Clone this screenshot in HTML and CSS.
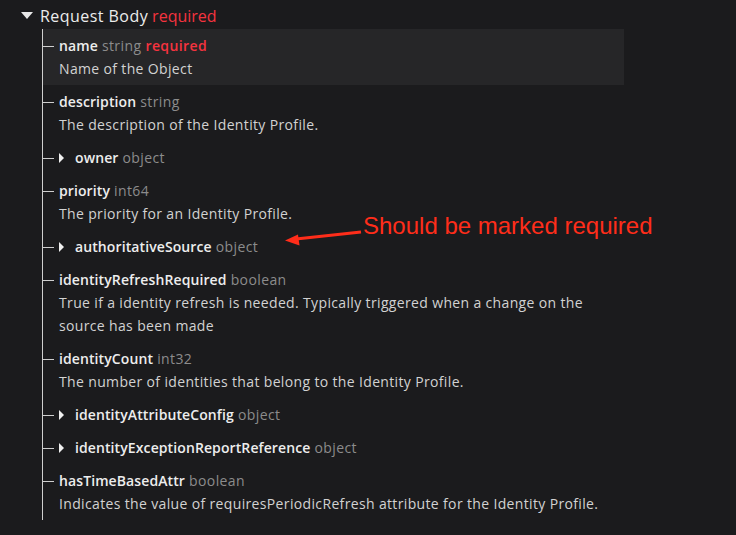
FILE: index.html
```html
<!DOCTYPE html>
<html>
<head>
<meta charset="utf-8">
<link rel="stylesheet" href="styles.css">
</head>
<body>
<div class="schema">
  <div class="heading">
    <span class="caret-down"></span>
    <span class="heading-title">Request Body</span>
    <span class="req">required</span>
  </div>
  <ul class="props">
    <li class="prop active">
      <div class="title"><span class="name">name</span> <span class="type">string</span> <span class="req small">required</span></div>
      <div class="desc">Name of the Object</div>
    </li>
    <li class="prop">
      <div class="title"><span class="name">description</span> <span class="type">string</span></div>
      <div class="desc">The description of the Identity Profile.</div>
    </li>
    <li class="prop collapsed">
      <div class="title"><span class="caret-right"></span><span class="name">owner</span> <span class="type">object</span></div>
    </li>
    <li class="prop">
      <div class="title"><span class="name">priority</span> <span class="type">int64</span></div>
      <div class="desc">The priority for an Identity Profile.</div>
    </li>
    <li class="prop collapsed">
      <div class="title"><span class="caret-right"></span><span class="name">authoritativeSource</span> <span class="type">object</span></div>
      <div class="note">
        <svg class="arrow" width="80" height="20" viewBox="0 0 80 20"><path d="M77 6 L12 13" stroke="#ff2d1a" stroke-width="3" fill="none"/><path d="M1 14.5 L14 8.5 L15.5 19.5 Z" fill="#ff2d1a"/></svg>
        <span class="note-text">Should be marked required</span>
      </div>
    </li>
    <li class="prop">
      <div class="title"><span class="name">identityRefreshRequired</span> <span class="type">boolean</span></div>
      <div class="desc">True if a identity refresh is needed. Typically triggered when a change on the source has been made</div>
    </li>
    <li class="prop">
      <div class="title"><span class="name">identityCount</span> <span class="type">int32</span></div>
      <div class="desc">The number of identities that belong to the Identity Profile.</div>
    </li>
    <li class="prop collapsed">
      <div class="title"><span class="caret-right"></span><span class="name">identityAttributeConfig</span> <span class="type">object</span></div>
    </li>
    <li class="prop collapsed">
      <div class="title"><span class="caret-right"></span><span class="name">identityExceptionReportReference</span> <span class="type">object</span></div>
    </li>
    <li class="prop">
      <div class="title"><span class="name">hasTimeBasedAttr</span> <span class="type">boolean</span></div>
      <div class="desc">Indicates the value of requiresPeriodicRefresh attribute for the Identity Profile.</div>
    </li>
  </ul>
</div>
</body>
</html>
```
FILE: styles.css
```css
html, body {
  margin: 0;
  padding: 0;
  background: #1b1b1d;
}
body {
  font-family: "Open Sans", "Noto Sans", sans-serif;
  color: #d6d6d6;
  width: 736px;
  height: 535px;
  overflow: hidden;
}
.schema {
  padding: 4px 0 0 21px;
}
.heading {
  display: flex;
  align-items: center;
  height: 23px;
  font-size: 16px;
  font-weight: 500;
  white-space: nowrap;
}
.caret-down {
  width: 0;
  height: 0;
  border-left: 6px solid transparent;
  border-right: 6px solid transparent;
  border-top: 7px solid #e8e8e8;
  margin-right: 7px;
}
.heading-title {
  color: #ececec;
  margin-right: 4px;
  letter-spacing: 0.45px;
}
.req {
  color: #f5333f;
}
.req.small {
  font-weight: 600;
}
.props {
  list-style: none;
  margin: 2px 0 0 21px;
  padding: 0;
  border-left: 1px solid #cfcfcf;
  width: 581px;
}
.prop {
  position: relative;
  padding: 5px 0 5px 16px;
}
.prop::before {
  content: "";
  position: absolute;
  left: 0;
  top: 17px;
  width: 11px;
  height: 1px;
  background: #cfcfcf;
}
.prop.active {
  background: #262628;
}
.title {
  height: 23px;
  line-height: 23px;
  font-size: 14px;
  white-space: nowrap;
  letter-spacing: 0.4px;
}
.name {
  font-weight: 600;
  color: #ededed;
  letter-spacing: 0.1px;
}
.type {
  color: #8c8c8c;
}
.desc {
  font-size: 14px;
  line-height: 23px;
  color: #d2d2d2;
  letter-spacing: 0.35px;
  padding-right: 22px;
}
.caret-right {
  display: inline-block;
  vertical-align: middle;
  width: 0;
  height: 0;
  margin-top: -2px;
  border-top: 5px solid transparent;
  border-bottom: 5px solid transparent;
  border-left: 5px solid #f0f0f0;
  margin-right: 11px;
}
.note {
  position: absolute;
  left: 241px;
  top: -18px;
  display: flex;
  align-items: flex-start;
  white-space: nowrap;
}
.arrow {
  margin-top: 14px;
  margin-right: -1px;
}
.note-text {
  font-family: "Liberation Sans", Arial, sans-serif;
  font-size: 24px;
  line-height: 28px;
  color: #ff2d1a;
}
```
